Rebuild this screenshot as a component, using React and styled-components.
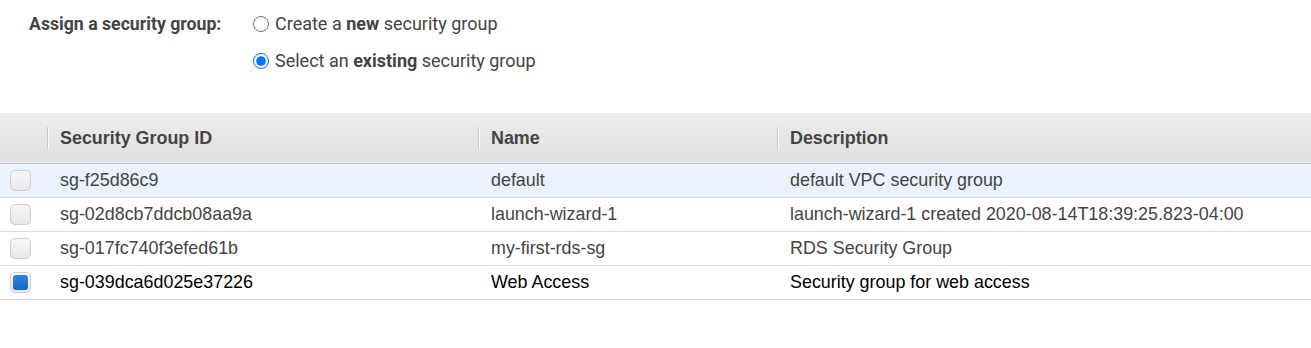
import React, { useState } from 'react'
import styled, { createGlobalStyle } from 'styled-components'

const GlobalStyle = createGlobalStyle`
  body {
    margin: 0;
    background: #fff;
    font-family: "Liberation Sans", Arial, sans-serif;
  }
`

const groups = [
  { id: 'sg-f25d86c9', name: 'default', desc: 'default VPC security group' },
  { id: 'sg-02d8cb7ddcb08aa9a', name: 'launch-wizard-1', desc: 'launch-wizard-1 created 2020-08-14T18:39:25.823-04:00' },
  { id: 'sg-017fc740f3efed61b', name: 'my-first-rds-sg', desc: 'RDS Security Group' },
  { id: 'sg-039dca6d025e37226', name: 'Web Access', desc: 'Security group for web access' },
]

const Page = styled.div`
  width: 1311px;
`

const AssignSection = styled.div`
  display: flex;
  padding: 12px 0 0 29px;
  height: 113px;
  box-sizing: border-box;
  font-family: Roboto, "Liberation Sans", sans-serif;
  color: #444;
`

const AssignLabel = styled.div`
  width: 224px;
  font-weight: bold;
  font-size: 17.7px;
  line-height: 24px;
`

const RadioList = styled.div`
  display: flex;
  flex-direction: column;
  gap: 13px;
`

const RadioRow = styled.label`
  display: flex;
  align-items: center;
  gap: 6px;
  font-size: 18px;
  line-height: 24px;

  b {
    font-weight: bold;
  }

  input {
    margin: 0 0 1px;
    width: 16px;
    height: 16px;
  }
`

const Table = styled.table`
  width: 100%;
  border-collapse: collapse;
  table-layout: fixed;
  font-size: 17.9px;
`

const HeadRow = styled.tr`
  height: 50px;
  background: linear-gradient(#ededed, #e0e0e0);
  border-bottom: 1px solid #c8c8c8;
`

const HeadCell = styled.th`
  position: relative;
  box-sizing: border-box;
  text-align: left;
  font-weight: bold;
  color: #444;
  padding: 1px 0 0 13px;
  width: ${p => p.$w || 'auto'};

  &::before {
    content: '';
    display: ${p => (p.$sep ? 'block' : 'none')};
    position: absolute;
    left: 0;
    top: 14px;
    height: 22px;
    width: 1px;
    background: #c9c9c9;
    box-shadow: 1px 0 0 #fafafa;
  }
`

const Row = styled.tr`
  height: 34px;
  background: ${p => (p.$hover ? '#eaf2fd' : '#fff')};
  border-bottom: 1px solid #dcdcdc;
  color: ${p => (p.$checked ? '#000' : '#444')};
  cursor: pointer;
`

const Cell = styled.td`
  padding: 0 0 0 13px;
  white-space: nowrap;
  overflow: hidden;
`

const BoxCell = styled.td`
  padding: 0 0 0 10px;
`

const Check = styled.span`
  display: block;
  width: 21px;
  height: 21px;
  border: 1px solid #cfcfcf;
  border-radius: 5px;
  background: linear-gradient(#f6f6f6, #e8e8e8);
  box-sizing: border-box;
  padding: 2px;
  margin-top: 1px;

  &::after {
    content: '';
    display: ${p => (p.$on ? 'block' : 'none')};
    width: 100%;
    height: 100%;
    border-radius: 3px;
    background: linear-gradient(#2e86e0, #1565c6);
  }
`

export default function App() {
  const [mode, setMode] = useState('existing')
  const [selected, setSelected] = useState('sg-039dca6d025e37226')

  return (
    <Page>
      <GlobalStyle />
      <AssignSection>
        <AssignLabel>Assign a security group:</AssignLabel>
        <RadioList>
          <RadioRow>
            <input type="radio" name="sg" checked={mode === 'new'} onChange={() => setMode('new')} />
            <span>Create a <b>new</b> security group</span>
          </RadioRow>
          <RadioRow>
            <input type="radio" name="sg" checked={mode === 'existing'} onChange={() => setMode('existing')} />
            <span>Select an <b>existing</b> security group</span>
          </RadioRow>
        </RadioList>
      </AssignSection>
      <Table>
        <thead>
          <HeadRow>
            <HeadCell $w="47px" />
            <HeadCell $w="431px" $sep>Security Group ID</HeadCell>
            <HeadCell $w="299px" $sep>Name</HeadCell>
            <HeadCell $sep>Description</HeadCell>
          </HeadRow>
        </thead>
        <tbody>
          {groups.map((g, i) => (
            <Row key={g.id} $hover={i === 0} $checked={selected === g.id} onClick={() => setSelected(g.id)}>
              <BoxCell><Check $on={selected === g.id} /></BoxCell>
              <Cell>{g.id}</Cell>
              <Cell>{g.name}</Cell>
              <Cell>{g.desc}</Cell>
            </Row>
          ))}
        </tbody>
      </Table>
    </Page>
  )
}
